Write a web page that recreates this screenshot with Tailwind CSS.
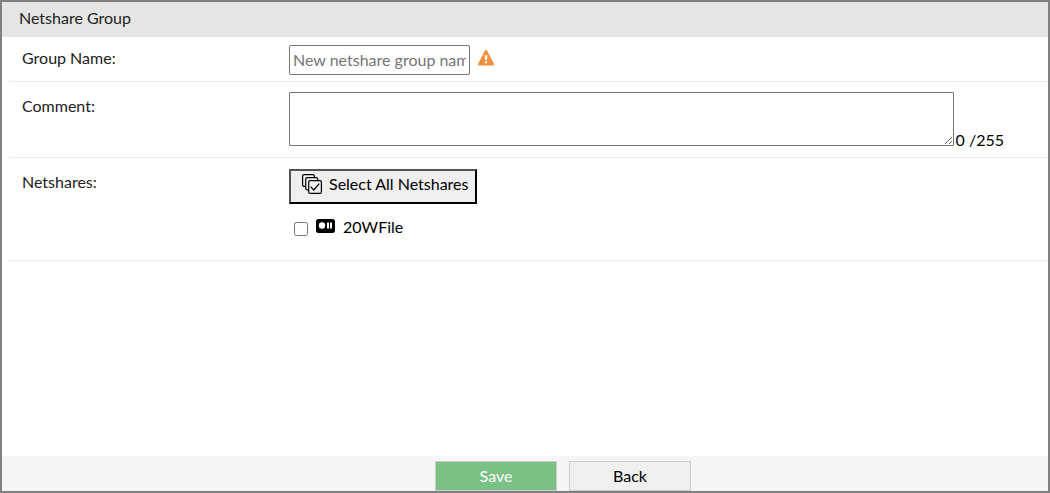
<!DOCTYPE html>
<html lang="en">
<head>
<meta charset="utf-8">
<meta name="viewport" content="width=device-width, initial-scale=1">
<title>Netshare Group</title>
<script src="https://cdn.jsdelivr.net/npm/@tailwindcss/browser@4"></script>
</head>
<body class="font-['Lato',sans-serif] text-base leading-5 text-black">
<form class="flex min-h-screen flex-col border-2 border-[#808080] bg-white">
  <h1 class="bg-[#e5e5e5] px-[17px] pt-1.5 pb-[9px] text-[#222]">Netshare Group</h1>

  <main class="flex-1 pl-[7px]">
    <div class="flex border-b border-[#ececec] pt-2 pb-1.5">
      <label for="name" class="w-[280px] shrink-0 pt-[3px] pl-[13px] text-[#222]">Group Name:</label>
      <input id="name" type="text" placeholder="New netshare group name" class="h-[30px] w-[181px] rounded-xs border border-[#767676] bg-white px-[3px] pb-0.5 placeholder:text-[#757575]">
      <svg class="mt-[5px] ml-2 h-4 w-4" viewBox="0 0 16 16" role="img" aria-label="Required">
        <path fill="#f0903f" fill-rule="evenodd" d="M8 0c.5 0 .8.2 1 .6l6.800 13c.5 1-.1 1.900-1.100 1.900H1.300c-1 0-1.600-.9-1.100-1.900L7 .6C7.200.2 7.500 0 8 0ZM6.600 5.300 7 10h2l.4-4.700H6.600ZM6.900 11.200v2.100h2.200v-2.100H6.900Z"/>
      </svg>
    </div>

    <div class="flex border-b border-[#ececec] pt-2.5 pb-[11px]">
      <label for="comment" class="w-[280px] shrink-0 pt-1 pl-[13px] text-[#222]">Comment:</label>
      <div class="flex flex-1 items-end gap-0.5 pr-11">
        <textarea id="comment" maxlength="255" class="h-[54px] flex-1 resize rounded-[1px] border border-[#767676] bg-white p-0.5"></textarea>
        <span class="-mb-1 leading-5">0 /255</span>
      </div>
    </div>

    <div class="flex border-b border-[#ececec] pt-[11px] pb-[23px]">
      <span class="w-[280px] shrink-0 pt-[3px] pl-[13px] text-[#222]">Netshares:</span>
      <div>
        <button type="button" class="flex h-[35px] items-center border-2 border-black bg-[#efefef] pr-[7px] pb-[5px] pl-[11px] [border-style:outset]">
          <svg class="mr-[7px] h-5 w-5" viewBox="0 0 20 20" fill="none" stroke="#000" stroke-width="1.200" aria-hidden="true">
            <path d="M3.500 12.400H2.100A1.500 1.500 0 0 1 .6 10.900V2.100A1.500 1.500 0 0 1 2.100.6h8.800a1.500 1.500 0 0 1 1.500 1.500v1.400"/>
            <path d="M6.600 15.800H5.200a1.500 1.500 0 0 1-1.500-1.500V5.200a1.500 1.500 0 0 1 1.500-1.500h9.100a1.500 1.500 0 0 1 1.500 1.500v1.400"/>
            <rect x="6.700" y="6.700" width="12.700" height="12.700" rx="1.500"/>
            <path d="m8.600 12.700 3.200 3.300 5.500-6.300"/>
          </svg>
          Select All Netshares
        </button>
        <div class="mt-[13px] flex items-start pl-[5px]">
          <input id="share" type="checkbox" class="mt-[5px] h-3.5 w-3.5">
          <label for="share" class="ml-2 flex">
            <svg class="mt-0.5 mr-2 h-[14px] w-[19px]" viewBox="0 0 19 14" aria-hidden="true">
              <rect width="19" height="14" rx="2.500" fill="#000"/>
              <circle cx="6" cy="6.500" r="3.200" fill="#fff"/>
              <path fill="#fff" d="M11 3.500h2v6h-2zM14 3.500h2v6h-2z"/>
            </svg>
            20WFile
          </label>
        </div>
      </div>
    </div>
  </main>

  <footer class="flex justify-center gap-3 bg-[#f5f5f5] pt-[5px] pl-[76px]">
    <button type="submit" class="h-[30px] w-[122px] border border-[#ccc] bg-[#7bc185] text-white">Save</button>
    <button type="button" class="h-[30px] w-[122px] border border-[#ccc] bg-[#efefef]">Back</button>
  </footer>
</form>
</body>
</html>
